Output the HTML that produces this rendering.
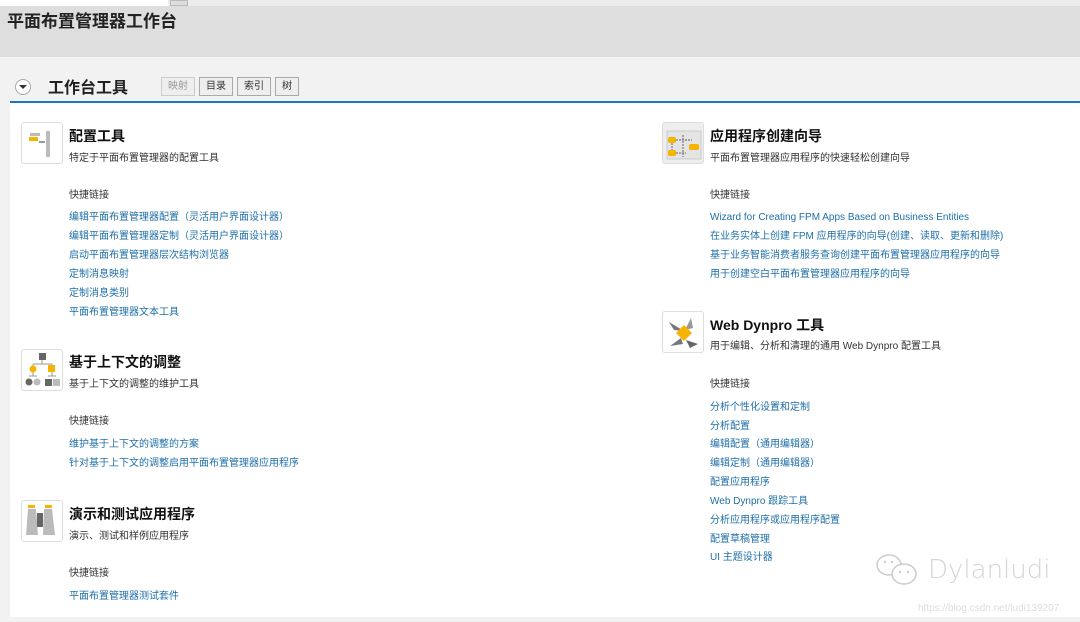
<!DOCTYPE html>
<html><head><meta charset="utf-8"><style>
*{margin:0;padding:0;box-sizing:border-box}
body{width:1080px;height:622px;background:#f2f2f2;font-family:"Liberation Sans","Noto Sans CJK SC",sans-serif;position:relative;overflow:hidden;color:#222}
.a{position:absolute;white-space:nowrap}
.t{font-size:14px;line-height:16px;font-weight:bold;color:#111;margin-top:1px}
.d,.q{font-size:10px;line-height:13px;color:#333;margin-top:3px}
.l{font-size:10px;line-height:13px;color:#1f6fa8;margin-top:3px}
.ic{position:absolute;width:42px;height:42px;border:1px solid #ddd;border-radius:3px;background:#fff}
.btn{position:absolute;top:77px;height:19px;border:1px solid #aaa;background:#eee;font-size:10px;line-height:17px;text-align:center;color:#333}
</style></head><body>
<div class="a" style="left:0;top:0;width:1080px;height:6px;background:#ececec"></div>
<div class="a" style="left:0;top:0;width:168px;height:6px;background:#fff"></div>
<div class="a" style="left:170px;top:0;width:18px;height:6px;background:#ddd;border:1px solid #bbb"></div>
<div class="a" style="left:0;top:6px;width:1080px;height:51px;background:#dedede"></div>
<div class="a" style="left:7px;top:12px;font-size:17px;line-height:20px;font-weight:bold;color:#222">平面布置管理器工作台</div>
<div class="a" style="left:15px;top:79px;width:16px;height:16px;border:1px solid #aaa;border-radius:50%;background:#fff"></div>
<div class="a" style="left:19px;top:85px;width:0;height:0;border-left:4px solid transparent;border-right:4px solid transparent;border-top:4px solid #333"></div>
<div class="a" style="left:48px;top:79px;font-size:16px;line-height:19px;font-weight:bold;color:#222">工作台工具</div>
<div class="btn" style="left:161px;width:34px;color:#999;border-color:#ccc">映射</div>
<div class="btn" style="left:199px;width:34px">目录</div>
<div class="btn" style="left:237px;width:34px">索引</div>
<div class="btn" style="left:275px;width:24px">树</div>
<div class="a" style="left:10px;top:101px;width:1070px;height:2px;background:#1a79c0"></div>
<div class="a" style="left:10px;top:103px;width:1070px;height:514px;background:#fff"></div>

<div class="ic" style="left:21px;top:122px"><svg width="42" height="42"><rect x="8" y="10" width="10" height="3" fill="#bbb"/><rect x="7" y="14" width="9" height="4" fill="#f5b400"/><rect x="17" y="18" width="6" height="2" fill="#999"/><rect x="24" y="8" width="4" height="26" fill="#bbb"/></svg></div>
<div class="a t" style="left:69px;top:127px">配置工具</div>
<div class="a d" style="left:69px;top:149px">特定于平面布置管理器的配置工具</div>
<div class="a q" style="left:69px;top:186px">快捷链接</div>
<div class="a l" style="left:69px;top:208px">编辑平面布置管理器配置（灵活用户界面设计器）</div>
<div class="a l" style="left:69px;top:227px">编辑平面布置管理器定制（灵活用户界面设计器）</div>
<div class="a l" style="left:69px;top:246px">启动平面布置管理器层次结构浏览器</div>
<div class="a l" style="left:69px;top:265px">定制消息映射</div>
<div class="a l" style="left:69px;top:284px">定制消息类别</div>
<div class="a l" style="left:69px;top:303px">平面布置管理器文本工具</div>

<div class="ic" style="left:21px;top:349px"><svg width="42" height="42"><rect x="17" y="3" width="7" height="7" fill="#666"/><path d="M20 10v4M11 14h19M11 14v4M30 14v4M11 22v4M30 22v4M7 26h8M26 26h8" stroke="#999" fill="none"/><circle cx="11" cy="19" r="3.5" fill="#f5b400"/><rect x="26" y="15" width="7" height="7" fill="#f5b400"/><circle cx="7" cy="32" r="3.5" fill="#666"/><circle cx="15" cy="32" r="3.5" fill="#bbb"/><rect x="23" y="29" width="7" height="7" fill="#666"/><rect x="31" y="29" width="7" height="7" fill="#bbb"/></svg></div>
<div class="a t" style="left:69px;top:353px">基于上下文的调整</div>
<div class="a d" style="left:69px;top:375px">基于上下文的调整的维护工具</div>
<div class="a q" style="left:69px;top:412px">快捷链接</div>
<div class="a l" style="left:69px;top:435px">维护基于上下文的调整的方案</div>
<div class="a l" style="left:69px;top:454px">针对基于上下文的调整启用平面布置管理器应用程序</div>

<div class="ic" style="left:21px;top:500px"><svg width="42" height="42"><rect x="6" y="4" width="7" height="3" fill="#f5b400"/><rect x="23" y="4" width="7" height="3" fill="#f5b400"/><path d="M6 8h8l2 26h-12z" fill="#bbb"/><path d="M22 8h8l3 26h-12z" fill="#bbb"/><rect x="15" y="12" width="6" height="14" fill="#666"/></svg></div>
<div class="a t" style="left:69px;top:505px">演示和测试应用程序</div>
<div class="a d" style="left:69px;top:527px">演示、测试和样例应用程序</div>
<div class="a q" style="left:69px;top:564px">快捷链接</div>
<div class="a l" style="left:69px;top:587px">平面布置管理器测试套件</div>

<div class="ic" style="left:662px;top:122px;background:#eee"><svg width="42" height="42"><rect x="4" y="8" width="34" height="28" fill="#e4e4e4" stroke="#ccc"/><rect x="5" y="14" width="8" height="6" rx="2" fill="#f5b400"/><rect x="5" y="27" width="8" height="6" rx="2" fill="#f5b400"/><rect x="26" y="21" width="10" height="6" rx="2" fill="#f5b400"/><path d="M9 20v7M13 17h16M13 30h10M20 12v22" stroke="#666" fill="none" stroke-dasharray="2 1"/></svg></div>
<div class="a t" style="left:710px;top:127px">应用程序创建向导</div>
<div class="a d" style="left:710px;top:149px">平面布置管理器应用程序的快速轻松创建向导</div>
<div class="a q" style="left:710px;top:186px">快捷链接</div>
<div class="a l" style="left:710px;top:208px">Wizard for Creating FPM Apps Based on Business Entities</div>
<div class="a l" style="left:710px;top:227px">在业务实体上创建 FPM 应用程序的向导(创建、读取、更新和删除)</div>
<div class="a l" style="left:710px;top:246px">基于业务智能消费者服务查询创建平面布置管理器应用程序的向导</div>
<div class="a l" style="left:710px;top:265px">用于创建空白平面布置管理器应用程序的向导</div>

<div class="ic" style="left:662px;top:311px"><svg width="42" height="42"><path d="M6 10l15 9-10-1z" fill="#777"/><path d="M28 6l-6 12 8-2z" fill="#999"/><path d="M7 34l11-8 2 6z" fill="#777"/><path d="M35 32l-12-4 4 8z" fill="#666"/><path d="M21 13l8 8-8 8-8-8z" fill="#f5b400"/></svg></div>
<div class="a t" style="left:710px;top:316px">Web Dynpro 工具</div>
<div class="a d" style="left:710px;top:337px">用于编辑、分析和清理的通用 Web Dynpro 配置工具</div>
<div class="a q" style="left:710px;top:375px">快捷链接</div>
<div class="a l" style="left:710px;top:398px">分析个性化设置和定制</div>
<div class="a l" style="left:710px;top:417px">分析配置</div>
<div class="a l" style="left:710px;top:435px">编辑配置（通用编辑器）</div>
<div class="a l" style="left:710px;top:454px">编辑定制（通用编辑器）</div>
<div class="a l" style="left:710px;top:473px">配置应用程序</div>
<div class="a l" style="left:710px;top:492px">Web Dynpro 跟踪工具</div>
<div class="a l" style="left:710px;top:511px">分析应用程序或应用程序配置</div>
<div class="a l" style="left:710px;top:530px">配置草稿管理</div>
<div class="a l" style="left:710px;top:548px">UI 主题设计器</div>

<svg class="a" style="left:874px;top:552px" width="50" height="40"><ellipse cx="15" cy="13" rx="12" ry="10" fill="none" stroke="#ccc" stroke-width="1.5"/><ellipse cx="30" cy="22" rx="12" ry="10" fill="#fff" stroke="#ccc" stroke-width="1.5"/><circle cx="11" cy="10" r="1.2" fill="#ccc"/><circle cx="18" cy="10" r="1.2" fill="#ccc"/><circle cx="26" cy="20" r="1.2" fill="#ccc"/><circle cx="34" cy="20" r="1.2" fill="#ccc"/></svg>
<div class="a" style="left:928px;top:555px;font-size:26px;color:#d4d4d4;font-family:'DejaVu Sans',sans-serif;font-weight:200">Dylanludi</div>
<div class="a" style="left:918px;top:603px;font-size:10px;color:#ddd">https://blog.csdn.net/ludi139207</div>
</body></html>
